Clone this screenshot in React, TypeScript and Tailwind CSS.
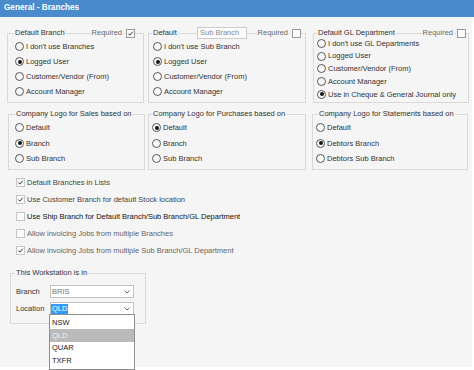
import React from "react";

function Check({ color = "#222" }: { color?: string }) {
  return (
    <svg width="9" height="9" viewBox="0 0 9 9" className="block">
      <path d="M1.6 4.6 L3.6 6.6 L7.4 2.2" fill="none" stroke={color} strokeWidth="1.2" />
    </svg>
  );
}

function CheckBox({ checked, border = "border-[#bdbdbd]" }: { checked?: boolean; border?: string }) {
  return (
    <span className={`w-[9px] h-[9px] border ${border} bg-[#fcfcfc] flex items-center justify-center shrink-0`}>
      {checked && <Check />}
    </span>
  );
}

function Radio({ checked, label, h }: { checked?: boolean; label: string; h: string }) {
  return (
    <div className={`flex items-center ${h}`}>
      <span className="w-[9px] h-[9px] rounded-full border border-[#565656] bg-[#fafafa] flex items-center justify-center shrink-0">
        {checked && <span className="w-[4px] h-[4px] rounded-full bg-[#151515]" />}
      </span>
      <span className="ml-[2px] whitespace-nowrap text-[#333]">{label}</span>
    </div>
  );
}

function Label({ children, cls = "text-[#333]" }: { children: React.ReactNode; cls?: string }) {
  return <span className={`bg-[#f5f5f5] px-[1px] whitespace-nowrap ${cls}`}>{children}</span>;
}

function Chevron() {
  return (
    <svg width="6" height="4" viewBox="0 0 6 4" className="block">
      <path d="M0.5 0.5 L3 3 L5.5 0.5" fill="none" stroke="#6a6a6a" strokeWidth="1" />
    </svg>
  );
}

export default function App() {
  return (
    <div className="w-[474px] h-[370px] bg-white overflow-hidden relative [font-family:'Liberation_Sans',Arial,sans-serif] text-[7.5px] leading-none text-[#333]">
      <div className="h-[17px] bg-[#4a8bcb] flex items-center pl-[4px] text-white font-bold text-[8.2px]">
        General - Branches
      </div>
      <div className="w-[472px] h-[350px] bg-[#f5f5f5] pl-[7px] pt-[16px]">
        {/* Row 1 */}
        <div className="flex">
          <div className="w-[137px] h-[70px] border border-[#d9d9d9] flex flex-col">
            <div className="flex items-center h-[12px] -mt-[7px] pl-[6px] pr-[8px]">
              <Label>Default Branch</Label>
              <span className="ml-auto flex items-center">
                <Label cls="text-[#6b6b6b]">Required</Label>
                <span className="ml-[2px] bg-[#f5f5f5] pl-[1px]">
                  <CheckBox checked border="border-[#9a9a9a]" />
                </span>
              </span>
            </div>
            <div className="pl-[7px] flex flex-col">
              <Radio h="h-[15px]" label="I don't use Branches" />
              <Radio h="h-[15px]" checked label="Logged User" />
              <Radio h="h-[15px]" label="Customer/Vendor (From)" />
              <Radio h="h-[15px]" label="Account Manager" />
            </div>
          </div>

          <div className="ml-[4px] w-[158px] h-[70px] border border-[#d9d9d9] flex flex-col">
            <div className="flex items-center h-[12px] -mt-[7px] pl-[3px] pr-[4px]">
              <span className="w-[45px] flex">
                <Label>Default</Label>
              </span>
              <span className="w-[50px] h-[12px] border border-[#cdcdcd] bg-[#fcfcfc] text-[#8a8a8a] flex items-center pl-[2px] whitespace-nowrap">
                Sub Branch
              </span>
              <span className="ml-auto flex items-center">
                <Label cls="text-[#6b6b6b]">Required</Label>
                <span className="ml-[2px] bg-[#f5f5f5] pl-[1px]">
                  <CheckBox border="border-[#9a9a9a]" />
                </span>
              </span>
            </div>
            <div className="pl-[4px] flex flex-col">
              <Radio h="h-[15px]" label="I don't use Sub Branch" />
              <Radio h="h-[15px]" checked label="Logged User" />
              <Radio h="h-[15px]" label="Customer/Vendor (From)" />
              <Radio h="h-[15px]" label="Account Manager" />
            </div>
          </div>

          <div className="ml-[7px] w-[156px] h-[70px] border border-[#d9d9d9] flex flex-col">
            <div className="flex items-center h-[12px] -mt-[7px] pl-[3px] pr-[2px]">
              <Label>Default GL Department</Label>
              <span className="ml-auto flex items-center">
                <Label cls="text-[#6b6b6b]">Required</Label>
                <span className="ml-[2px] bg-[#f5f5f5] pl-[1px]">
                  <CheckBox border="border-[#9a9a9a]" />
                </span>
              </span>
            </div>
            <div className="pl-[3px] -mt-[2px] flex flex-col">
              <Radio h="h-[12.75px]" label="I don't use GL Departments" />
              <Radio h="h-[12.75px]" label="Logged User" />
              <Radio h="h-[12.75px]" label="Customer/Vendor (From)" />
              <Radio h="h-[12.75px]" label="Account Manager" />
              <Radio h="h-[12.75px]" checked label="Use in Cheque & General Journal only" />
            </div>
          </div>
        </div>

        {/* Row 2 */}
        <div className="flex mt-[11px]">
          <div className="ml-[1px] w-[137px] h-[56px] border border-[#d9d9d9] flex flex-col">
            <div className="flex items-center h-[12px] -mt-[7px] pl-[6px]">
              <Label>Company Logo for Sales based on</Label>
            </div>
            <div className="pl-[6px] flex flex-col">
              <Radio h="h-[15.5px]" label="Default" />
              <Radio h="h-[15.5px]" checked label="Branch" />
              <Radio h="h-[15.5px]" label="Sub Branch" />
            </div>
          </div>
          <div className="ml-[3px] w-[158px] h-[56px] border border-[#d9d9d9] flex flex-col">
            <div className="flex items-center h-[12px] -mt-[7px] pl-[3px]">
              <Label>Company Logo for Purchases based on</Label>
            </div>
            <div className="pl-[3px] flex flex-col">
              <Radio h="h-[15.5px]" checked label="Default" />
              <Radio h="h-[15.5px]" label="Branch" />
              <Radio h="h-[15.5px]" label="Sub Branch" />
            </div>
          </div>
          <div className="ml-[6px] w-[156px] h-[56px] border border-[#d9d9d9] flex flex-col">
            <div className="flex items-center h-[12px] -mt-[7px] pl-[5px]">
              <Label>Company Logo for Statements based on</Label>
            </div>
            <div className="pl-[3px] flex flex-col">
              <Radio h="h-[15.5px]" label="Default" />
              <Radio h="h-[15.5px]" checked label="Debtors Branch" />
              <Radio h="h-[15.5px]" label="Debtors Sub Branch" />
            </div>
          </div>
        </div>

        {/* Check list */}
        <div className="mt-[4px] pl-[9px] flex flex-col">
          {[
            { c: true, t: "Default Branches in Lists", col: "text-[#444]" },
            { c: true, t: "Use Customer Branch for default Stock location", col: "text-[#444]" },
            { c: false, t: "Use Ship Branch for Default Branch/Sub Branch/GL Department", col: "text-[#111]" },
            { c: false, t: "Allow invoicing Jobs from multiple Branches", col: "text-[#666]" },
            { c: true, t: "Allow invoicing Jobs from multiple Sub Branch/GL Department", col: "text-[#666]" },
          ].map((r) => (
            <div key={r.t} className="flex items-center h-[17px]">
              <CheckBox checked={r.c} border="border-[#c6c6c6]" />
              <span className={`ml-[2px] whitespace-nowrap ${r.col}`}>{r.t}</span>
            </div>
          ))}
        </div>

        {/* Workstation */}
        <div className="mt-[14px] ml-[3px] w-[136px] h-[51px] border border-[#d9d9d9] flex flex-col">
          <div className="flex items-center h-[12px] -mt-[7px] pl-[4px]">
            <Label>This Workstation is in</Label>
          </div>
          <div className="mt-[6px] flex items-center h-[13px]">
            <span className="w-[39px] pl-[5px] text-[#333]">Branch</span>
            <div className="w-[84px] h-[13px] border border-[#c3c3c3] bg-white flex items-center pl-[1px] pr-[3px]">
              <span className="text-[#777]">BRIS</span>
              <span className="ml-auto"><Chevron /></span>
            </div>
          </div>
          <div className="mt-[4px] flex items-center h-[13px]">
            <span className="w-[39px] pl-[5px] text-[#333]">Location</span>
            <div className="relative w-[84px] h-[13px] border border-[#c3c3c3] bg-white flex items-center pr-[3px]">
              <span className="bg-[#3399ff] text-white h-[10px] flex items-center px-[1px]">QLD</span>
              <span className="ml-auto"><Chevron /></span>
              <div className="absolute top-[11px] -left-[2px] w-[86px] h-[56px] border border-[#8e8e8e] bg-white flex flex-col pt-[2px] z-10">
                <div className="h-[12.4px] flex items-center pl-[2px] text-[#222]">NSW</div>
                <div className="h-[12.4px] flex items-center pl-[2px] bg-[#bababa] text-[#f2f2f2]">QLD</div>
                <div className="h-[12.4px] flex items-center pl-[2px] text-[#222]">QUAR</div>
                <div className="h-[12.4px] flex items-center pl-[2px] text-[#222]">TXFR</div>
              </div>
            </div>
          </div>
        </div>
      </div>
    </div>
  );
}
